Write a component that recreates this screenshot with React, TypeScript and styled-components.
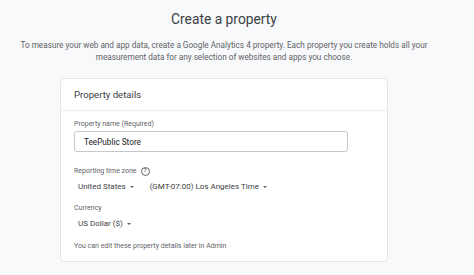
import React from "react";
import styled, { createGlobalStyle } from "styled-components";

const Global = createGlobalStyle`
  html, body {
    margin: 0;
    padding: 0;
    background: #f8f9fa;
  }
  body {
    font-family: Roboto, "Liberation Sans", Arial, sans-serif;
  }
`;

const Page = styled.div`
  width: 448px;
  height: 275px;
  box-sizing: border-box;
  padding-top: 9px;
  display: flex;
  flex-direction: column;
  align-items: center;
  overflow: hidden;
`;

const Title = styled.h1`
  margin: 0;
  font-size: 13.8px;
  line-height: 20px;
  font-weight: 400;
  color: #3c4043;
`;

const Intro = styled.p`
  margin: 10px 0 0;
  width: 420px;
  text-align: center;
  font-size: 8.2px;
  line-height: 12px;
  color: #5f6368;
`;

const Card = styled.section`
  margin-top: 15px;
  width: 328px;
  box-sizing: border-box;
  background: #fff;
  border: 1px solid #e3e5e8;
  border-radius: 4px;
`;

const CardHeader = styled.div`
  height: 31px;
  padding: 0 13px;
  display: flex;
  align-items: center;
  font-size: 9.6px;
  color: #3c4043;
  border-bottom: 1px solid #eceef0;
`;

const CardBody = styled.div`
  padding: 8px 13px 10px;
  display: flex;
  flex-direction: column;
`;

const Label = styled.div<{ $top?: number }>`
  margin-top: ${({ $top }) => $top ?? 0}px;
  display: flex;
  align-items: center;
  gap: 4px;
  font-size: 7px;
  line-height: 10px;
  color: #5f6368;
`;

const Input = styled.div`
  margin-top: 2px;
  width: 274px;
  height: 21px;
  box-sizing: border-box;
  padding: 0 9px;
  display: flex;
  align-items: center;
  border: 1px solid #c4c7c9;
  border-radius: 3px;
  font-size: 8.2px;
  color: #202124;
`;

const SelectRow = styled.div`
  margin-top: 4px;
  display: flex;
  gap: 16px;
  padding-left: 4px;
`;

const Select = styled.div`
  display: flex;
  align-items: center;
  gap: 4px;
  font-size: 8px;
  line-height: 13px;
  color: #3c4043;
`;

const Caret = styled.span`
  width: 0;
  height: 0;
  border-left: 2px solid transparent;
  border-right: 2px solid transparent;
  border-top: 2px solid #5f6368;
`;

const Help = styled.span`
  width: 7px;
  height: 7px;
  border: 1px solid #5f6368;
  border-radius: 50%;
  display: inline-flex;
  align-items: center;
  justify-content: center;
  font-size: 5.5px;
  line-height: 1;
  color: #5f6368;
  font-weight: 700;
`;

const Note = styled.div`
  margin-top: 11px;
  font-size: 7px;
  line-height: 10px;
  color: #5f6368;
`;

export default function App() {
  return (
    <>
      <Global />
      <Page>
        <Title>Create a property</Title>
        <Intro>
          To measure your web and app data, create a Google Analytics 4 property. Each property you
          create holds all your measurement data for any selection of websites and apps you choose.
        </Intro>
        <Card>
          <CardHeader>Property details</CardHeader>
          <CardBody>
            <Label>Property name (Required)</Label>
            <Input>TeePublic Store</Input>
            <Label $top={14}>
              Reporting time zone <Help>?</Help>
            </Label>
            <SelectRow>
              <Select>
                United States <Caret />
              </Select>
              <Select>
                (GMT-07:00) Los Angeles Time <Caret />
              </Select>
            </SelectRow>
            <Label $top={10}>Currency</Label>
            <SelectRow>
              <Select>
                US Dollar ($) <Caret />
              </Select>
            </SelectRow>
            <Note>You can edit these property details later in Admin</Note>
          </CardBody>
        </Card>
      </Page>
    </>
  );
}
